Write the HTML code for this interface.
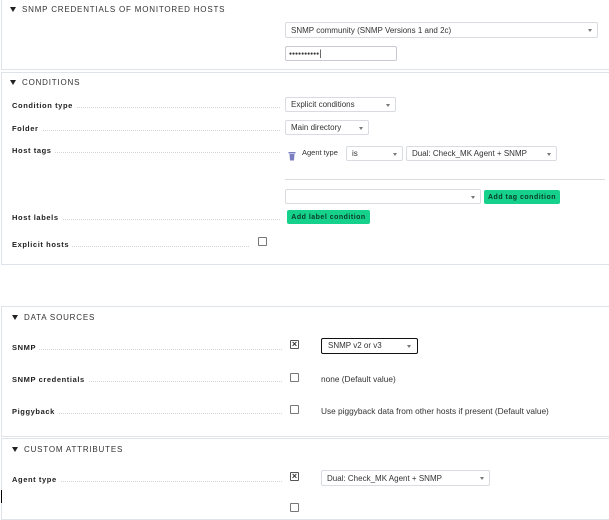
<!DOCTYPE html>
<html><head><style>
body{margin:0;width:609px;height:505px;background:#fff;position:relative;overflow:hidden;font-family:"Liberation Sans",sans-serif;color:#333}
.a{position:absolute}
.panel{position:absolute;left:1px;right:0;border:1px solid #dfe3ea;border-right:none;background:#fff}
.h{position:absolute;font-size:8px;letter-spacing:.8px;color:#333}
.h:before{content:"";display:inline-block;border-left:3px solid transparent;border-right:3px solid transparent;border-top:5px solid #222;margin-right:6px;vertical-align:0}
.l{position:absolute;left:12px;font-size:7.5px;line-height:11px;height:11px;font-weight:bold;letter-spacing:.6px;white-space:nowrap;overflow:hidden;color:#222}
.l span{display:block;border-bottom:1px dotted #d4d4d4;position:absolute;left:0;right:0;top:7px;z-index:0}
.l b{background:#fff;position:relative;z-index:1;padding-right:3px}
.sel{position:absolute;border:1px solid #d8dbe0;border-radius:2px;font-size:8px;line-height:14px;padding-left:5px;box-sizing:border-box;color:#333;background:#fff}
.sel:after{content:"";position:absolute;right:5px;top:6px;border-left:2.5px solid transparent;border-right:2.5px solid transparent;border-top:3px solid #777}
.btn{position:absolute;background:#15d18b;border-radius:2px;font-size:7px;font-weight:bold;letter-spacing:.5px;color:#0b3a26;line-height:15px;height:14px;text-align:center}
.cb{position:absolute;width:9px;height:9px;border:1px solid #555;border-radius:1px;box-sizing:border-box;font-size:9px;line-height:7px;text-align:center;font-weight:bold}
.t{position:absolute;font-size:8.3px;color:#333;white-space:nowrap}
</style></head><body>
<div class="panel" style="top:-1px;height:69px"></div>
<div class="h" style="left:10px;top:5px">SNMP CREDENTIALS OF MONITORED HOSTS</div>
<div class="sel" style="left:285px;top:22px;width:313px;height:16px;line-height:15px">SNMP community (SNMP Versions 1 and 2c)</div>
<div class="a" style="left:285px;top:46px;width:112px;height:15px;border:1px solid #c8ccd2;border-radius:2px;box-sizing:border-box;font-size:5px;line-height:12px;padding-left:3px;letter-spacing:0">●●●●●●●●●●<span style="font-size:9px;vertical-align:-1px">|</span></div>

<div class="panel" style="top:72px;height:191px"></div>
<div class="h" style="left:10px;top:78px">CONDITIONS</div>
<div class="l" style="top:100px;width:268px"><span></span><b>Condition type</b></div>
<div class="sel" style="left:285px;top:97px;width:111px;height:15px">Explicit conditions</div>
<div class="l" style="top:123px;width:268px"><span></span><b>Folder</b></div>
<div class="sel" style="left:285px;top:120px;width:84px;height:15px">Main directory</div>
<div class="l" style="top:145px;width:268px"><span></span><b>Host tags</b></div>
<svg class="a" style="left:288px;top:151px" width="8" height="10" viewBox="0 0 8 10"><rect x="0.5" y="1" width="7" height="1.5" fill="#7b7fc0"/><path d="M1.5 3h5l-.5 6.5h-4z" fill="#7b7fc0"/></svg>
<div class="t" style="left:302px;top:148px;font-size:7.5px">Agent type</div>
<div class="sel" style="left:346px;top:146px;width:57px;height:15px">is</div>
<div class="sel" style="left:406px;top:146px;width:151px;height:15px">Dual: Check_MK Agent + SNMP</div>
<div class="a" style="left:285px;top:179px;width:320px;height:1px;background:#ddd"></div>
<div class="sel" style="left:285px;top:189px;width:196px;height:15px"></div>
<div class="btn" style="left:484px;top:190px;width:76px">Add tag condition</div>
<div class="l" style="top:212px;width:268px"><span></span><b>Host labels</b></div>
<div class="btn" style="left:287px;top:210px;width:83px">Add label condition</div>
<div class="l" style="top:239px;width:237px"><span></span><b>Explicit hosts</b></div>
<div class="cb" style="left:258px;top:237px;border-color:#777"></div>

<div class="panel" style="top:306px;height:129px"></div>
<div class="h" style="left:12px;top:313px">DATA SOURCES</div>
<div class="l" style="top:342px;width:270px"><span></span><b>SNMP</b></div>
<div class="cb" style="left:290px;top:340px">×</div>
<div class="a" style="left:321px;top:338px;width:97px;height:16px;border:1.5px solid #111;border-radius:2px;box-sizing:border-box;font-size:8px;line-height:13px;padding-left:6px">SNMP v2 or v3<span style="position:absolute;right:6px;top:6px;border-left:2.5px solid transparent;border-right:2.5px solid transparent;border-top:3px solid #777"></span></div>
<div class="l" style="top:374px;width:270px"><span></span><b>SNMP credentials</b></div>
<div class="cb" style="left:290px;top:373px;border-color:#777"></div>
<div class="t" style="left:321px;top:374px">none (Default value)</div>
<div class="l" style="top:406px;width:270px"><span></span><b>Piggyback</b></div>
<div class="cb" style="left:290px;top:405px;border-color:#777"></div>
<div class="t" style="left:321px;top:406px">Use piggyback data from other hosts if present (Default value)</div>

<div class="panel" style="top:438px;height:80px"></div>
<div class="h" style="left:12px;top:445px">CUSTOM ATTRIBUTES</div>
<div class="l" style="top:474px;width:270px"><span></span><b>Agent type</b></div>
<div class="cb" style="left:290px;top:472px">×</div>
<div class="sel" style="left:321px;top:470px;width:169px;height:16px;line-height:15px">Dual: Check_MK Agent + SNMP</div>
<div class="a" style="left:1px;top:490px;width:1px;height:13px;background:#000"></div>
<div class="cb" style="left:290px;top:503px;border-color:#777"></div>
</body></html>
